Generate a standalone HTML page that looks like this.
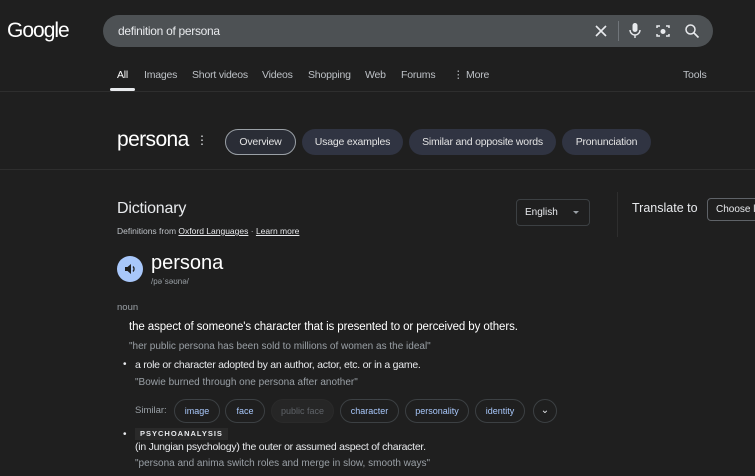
<!DOCTYPE html>
<html><head><meta charset="utf-8"><style>
*{margin:0;padding:0;box-sizing:border-box}
body{width:755px;height:476px;overflow:hidden;background:#1f1f1f;font-family:"Liberation Sans",Arial,sans-serif;color:#e8eaed;position:relative}
.a{position:absolute;white-space:nowrap}
.nav{font-size:10.5px;color:#bdc1c6;top:69px;letter-spacing:-0.2px}
.chip{position:absolute;top:129px;height:26px;border-radius:13px;background:#303442;color:#e3e3e3;font-size:10.5px;line-height:26px;text-align:center;letter-spacing:-0.2px}
.sim{position:absolute;top:399px;height:24px;border-radius:12px;border:1px solid #3c4043;color:#a8c7fa;font-size:9px;line-height:22px;text-align:center}
</style></head><body>
<div class="a" style="left:7px;top:19px;font-size:21px;color:#fff;letter-spacing:-1px">Google</div>
<div class="a" style="left:103px;top:15px;width:610px;height:32px;border-radius:16px;background:#4d5154"></div>
<div class="a" style="left:118px;top:24px;font-size:12px;color:#e8eaed;letter-spacing:-0.3px">definition of persona</div>
<svg class="a" style="left:594px;top:24px" width="14" height="14" viewBox="0 0 14 14"><path d="M2 2L12 12M12 2L2 12" stroke="#e8eaed" stroke-width="1.6"/></svg>
<div class="a" style="left:618px;top:21px;width:1px;height:20px;background:#70757a"></div>
<svg class="a" style="left:628px;top:22px" width="14" height="18" viewBox="0 0 14 18"><rect x="4.5" y="1" width="5" height="9" rx="2.5" fill="#e8eaed"/><path d="M2 8a5 5 0 0 0 10 0M7 13v3" stroke="#e8eaed" stroke-width="1.4" fill="none"/></svg>
<svg class="a" style="left:655px;top:23px" width="16" height="16" viewBox="0 0 16 16"><path d="M2 5V3h3M11 3h3v2M2 11v2h3M14 11v2h-3" stroke="#e8eaed" stroke-width="1.5" fill="none"/><circle cx="8" cy="8.5" r="2.5" fill="#e8eaed"/></svg>
<svg class="a" style="left:684px;top:23px" width="16" height="16" viewBox="0 0 16 16"><circle cx="6.5" cy="6.5" r="4.5" stroke="#e8eaed" stroke-width="1.5" fill="none"/><path d="M10 10l4.5 4.5" stroke="#e8eaed" stroke-width="1.6"/></svg>
<div class="a nav" style="left:117px;color:#fff">All</div>
<div class="a" style="left:110px;top:88px;width:25px;height:3px;background:#e8eaed;border-radius:2px"></div>
<div class="a nav" style="left:144px">Images</div>
<div class="a nav" style="left:192px">Short videos</div>
<div class="a nav" style="left:262px">Videos</div>
<div class="a nav" style="left:308px">Shopping</div>
<div class="a nav" style="left:365px">Web</div>
<div class="a nav" style="left:401px">Forums</div>
<div class="a nav" style="left:453px">⋮&nbsp;More</div>
<div class="a nav" style="left:683px">Tools</div>
<div class="a" style="left:0;top:91px;width:755px;height:1px;background:#2e2e2e"></div>
<div class="a" style="left:117px;top:128px;font-size:21px;color:#fff;letter-spacing:-0.6px">persona</div>
<div class="a" style="left:196px;top:133px;font-size:12px;color:#e8eaed">⋮</div>
<div class="chip" style="left:225px;width:71px;background:#2a2d36;border:1px solid #9aa0a6;line-height:24px">Overview</div>
<div class="chip" style="left:302px;width:101px">Usage examples</div>
<div class="chip" style="left:409px;width:147px">Similar and opposite words</div>
<div class="chip" style="left:562px;width:89px">Pronunciation</div>
<div class="a" style="left:0;top:169px;width:755px;height:1px;background:#2e2e2e"></div>
<div class="a" style="left:117px;top:200px;font-size:16px;color:#e8eaed;letter-spacing:-0.2px">Dictionary</div>
<div class="a" style="left:117px;top:226px;font-size:8.5px;color:#bdc1c6">Definitions from <u style="color:#e8eaed">Oxford Languages</u> · <u style="color:#e8eaed">Learn more</u></div>
<div class="a" style="left:516px;top:199px;width:74px;height:27px;border:1px solid #3c4043;border-radius:4px"></div>
<div class="a" style="left:525px;top:207px;font-size:10px;color:#e8eaed">English</div>
<div class="a" style="left:573px;top:211px;width:0;height:0;border-left:3px solid transparent;border-right:3px solid transparent;border-top:3px solid #9aa0a6"></div>
<div class="a" style="left:617px;top:192px;width:1px;height:45px;background:#2e2e2e"></div>
<div class="a" style="left:632px;top:201px;font-size:12.5px;color:#e8eaed">Translate to</div>
<div class="a" style="left:707px;top:198px;width:60px;height:23px;border:1px solid #5f6368;border-radius:4px;font-size:10px;line-height:21px;padding-left:8px;color:#e8eaed;overflow:hidden">Choose l</div>
<div class="a" style="left:117px;top:256px;width:26px;height:26px;border-radius:50%;background:#a8c7fa"></div>
<svg class="a" style="left:123px;top:262px" width="14" height="14" viewBox="0 0 14 14"><path d="M2 5h2.5L8 2v10L4.5 9H2z" fill="#1f1f1f"/><path d="M10 4.5a3.5 3.5 0 0 1 0 5" stroke="#1f1f1f" stroke-width="1.3" fill="none"/></svg>
<div class="a" style="left:151px;top:252px;font-size:20px;color:#fff">persona</div>
<div class="a" style="left:151px;top:277px;font-size:8px;color:#9aa0a6">/pəˈsəʊnə/</div>
<div class="a" style="left:117px;top:302px;font-size:9.5px;color:#9aa0a6">noun</div>
<div class="a" style="left:129px;top:321px;font-size:11.5px;color:#fff;letter-spacing:-0.1px">the aspect of someone's character that is presented to or perceived by others.</div>
<div class="a" style="left:129px;top:341px;font-size:10px;color:#9aa0a6">"her public persona has been sold to millions of women as the ideal"</div>
<div class="a" style="left:123px;top:359px;font-size:10px;color:#e8eaed">•</div>
<div class="a" style="left:135px;top:359px;font-size:10.5px;color:#e8eaed;letter-spacing:-0.25px">a role or character adopted by an author, actor, etc. or in a game.</div>
<div class="a" style="left:135px;top:377px;font-size:10px;color:#9aa0a6">"Bowie burned through one persona after another"</div>
<div class="a" style="left:135px;top:405px;font-size:9.5px;color:#9aa0a6">Similar:</div>
<div class="sim" style="left:174px;width:46px">image</div>
<div class="sim" style="left:225px;width:40px">face</div>
<div class="sim" style="left:271px;width:63px;border-color:#2a2a2a;background:#262626;color:#5f6368">public face</div>
<div class="sim" style="left:340px;width:59px">character</div>
<div class="sim" style="left:405px;width:64px">personality</div>
<div class="sim" style="left:475px;width:50px">identity</div>
<div class="sim" style="left:533px;width:24px;color:#e8eaed;font-size:10px">⌄</div>
<div class="a" style="left:123px;top:429px;font-size:10px;color:#e8eaed">•</div>
<div class="a" style="left:135px;top:428px;height:12px;padding:0 5px;background:#2a2a2a;font-size:7.5px;line-height:12px;font-weight:bold;letter-spacing:1px;color:#e8eaed">PSYCHOANALYSIS</div>
<div class="a" style="left:135px;top:441px;font-size:10.5px;color:#e8eaed;letter-spacing:-0.25px">(in Jungian psychology) the outer or assumed aspect of character.</div>
<div class="a" style="left:135px;top:458px;font-size:10px;color:#9aa0a6">"persona and anima switch roles and merge in slow, smooth ways"</div>
</body></html>
